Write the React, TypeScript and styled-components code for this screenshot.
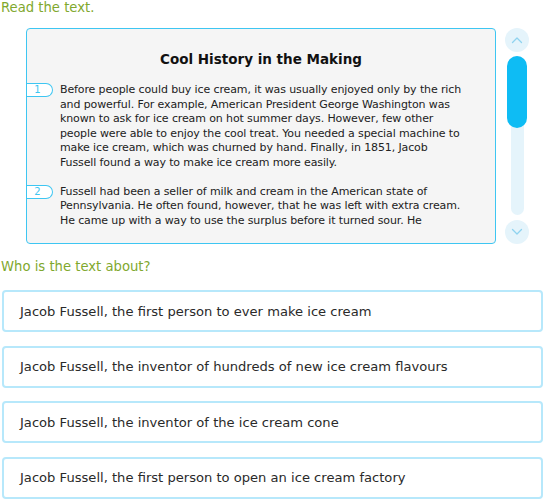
import React from "react";
import styled, { createGlobalStyle } from "styled-components";

const Global = createGlobalStyle`
  html, body { margin: 0; padding: 0; background: #fff; }
  body { font-family: Verdana, "DejaVu Sans", sans-serif; }
`;

const Page = styled.div`
  width: 545px;
  display: flex;
  flex-direction: column;
`;

const Prompt = styled.div`
  color: #7fa82e;
  font-size: 13.2px;
  line-height: 16px;
  padding-left: 1px;
`;

const PassageRow = styled.div`
  display: flex;
  gap: 9px;
  margin: 12px 0 0 26px;
`;

const PassageBox = styled.div`
  box-sizing: border-box;
  width: 470px;
  height: 216px;
  border: 1px solid #3ec6f2;
  border-radius: 4px;
  background: #f5f5f5;
  padding: 21px 0 17px;
`;

const PassageContent = styled.div`
  height: 100%;
  overflow: hidden;
`;

const Title = styled.div`
  text-align: center;
  font-weight: bold;
  font-size: 13.5px;
  line-height: 18px;
  color: #111;
  margin-bottom: 15px;
`;

const Para = styled.div`
  position: relative;
  padding: 0 30px 0 33px;
  font-size: 11px;
  letter-spacing: -0.12px;
  line-height: 14.5px;
  color: #222;
  margin-bottom: 14.5px;
`;

const Badge = styled.span`
  position: absolute;
  left: -1px;
  top: 0;
  box-sizing: border-box;
  width: 27px;
  height: 14px;
  border: 1px solid #3ec6f2;
  border-left: none;
  border-radius: 0 8px 8px 0;
  background: #fff;
  color: #3ec6f2;
  font-size: 10px;
  letter-spacing: 0;
  line-height: 12px;
  text-align: center;
  padding-right: 3px;
`;

const Scroll = styled.div`
  width: 24px;
  height: 216px;
  display: flex;
  flex-direction: column;
  align-items: center;
`;

const RoundBtn = styled.div`
  width: 24px;
  height: 24px;
  border-radius: 50%;
  background: #e5f4fb;
  display: flex;
  align-items: center;
  justify-content: center;
  flex-shrink: 0;
`;

const Track = styled.div`
  position: relative;
  flex: 1;
  width: 13px;
  margin: 4px 0 5px;
  border-radius: 7px;
  background: #e5f4fb;
`;

const Thumb = styled.div`
  position: absolute;
  left: -3.5px;
  top: 0;
  width: 20px;
  height: 72px;
  border-radius: 10px;
  background: #0ebcf4;
`;

const Question = styled(Prompt)`
  margin-top: 15px;
`;

const Choices = styled.div`
  display: flex;
  flex-direction: column;
  gap: 13.5px;
  margin: 15px 2px 0 2px;
`;

const Choice = styled.div`
  box-sizing: border-box;
  height: 42px;
  border: 2px solid #b7e8fb;
  border-radius: 4px;
  display: flex;
  align-items: center;
  padding-left: 16px;
  font-size: 13.1px;
  color: #2a2a2a;
`;

const Chevron = ({ up }: { up?: boolean }) => (
  <svg width="12" height="8" viewBox="0 0 12 8">
    <path
      d={up ? "M1.5 6.5 L6 2 L10.5 6.5" : "M1.5 1.5 L6 6 L10.5 1.5"}
      fill="none"
      stroke="#8fd3ef"
      strokeWidth="1.3"
      strokeLinecap="round"
      strokeLinejoin="round"
    />
  </svg>
);

const paragraphs = [
  "Before people could buy ice cream, it was usually enjoyed only by the rich and powerful. For example, American President George Washington was known to ask for ice cream on hot summer days. However, few other people were able to enjoy the cool treat. You needed a special machine to make ice cream, which was churned by hand. Finally, in 1851, Jacob Fussell found a way to make ice cream more easily.",
  "Fussell had been a seller of milk and cream in the American state of Pennsylvania. He often found, however, that he was left with extra cream. He came up with a way to use the surplus before it turned sour. He started\u00a0making ice cream in large batches and selling it at low prices.",
];

const options = [
  "Jacob Fussell, the first person to ever make ice cream",
  "Jacob Fussell, the inventor of hundreds of new ice cream flavours",
  "Jacob Fussell, the inventor of the ice cream cone",
  "Jacob Fussell, the first person to open an ice cream factory",
];

export default function App() {
  return (
    <Page>
      <Global />
      <Prompt>Read the text.</Prompt>
      <PassageRow>
        <PassageBox>
          <PassageContent>
            <Title>Cool History in the Making</Title>
            {paragraphs.map((p, i) => (
              <Para key={i}>
                <Badge>{i + 1}</Badge>
                {p}
              </Para>
            ))}
          </PassageContent>
        </PassageBox>
        <Scroll>
          <RoundBtn>
            <Chevron up />
          </RoundBtn>
          <Track>
            <Thumb />
          </Track>
          <RoundBtn>
            <Chevron />
          </RoundBtn>
        </Scroll>
      </PassageRow>
      <Question>Who is the text about?</Question>
      <Choices>
        {options.map((o) => (
          <Choice key={o}>{o}</Choice>
        ))}
      </Choices>
    </Page>
  );
}
